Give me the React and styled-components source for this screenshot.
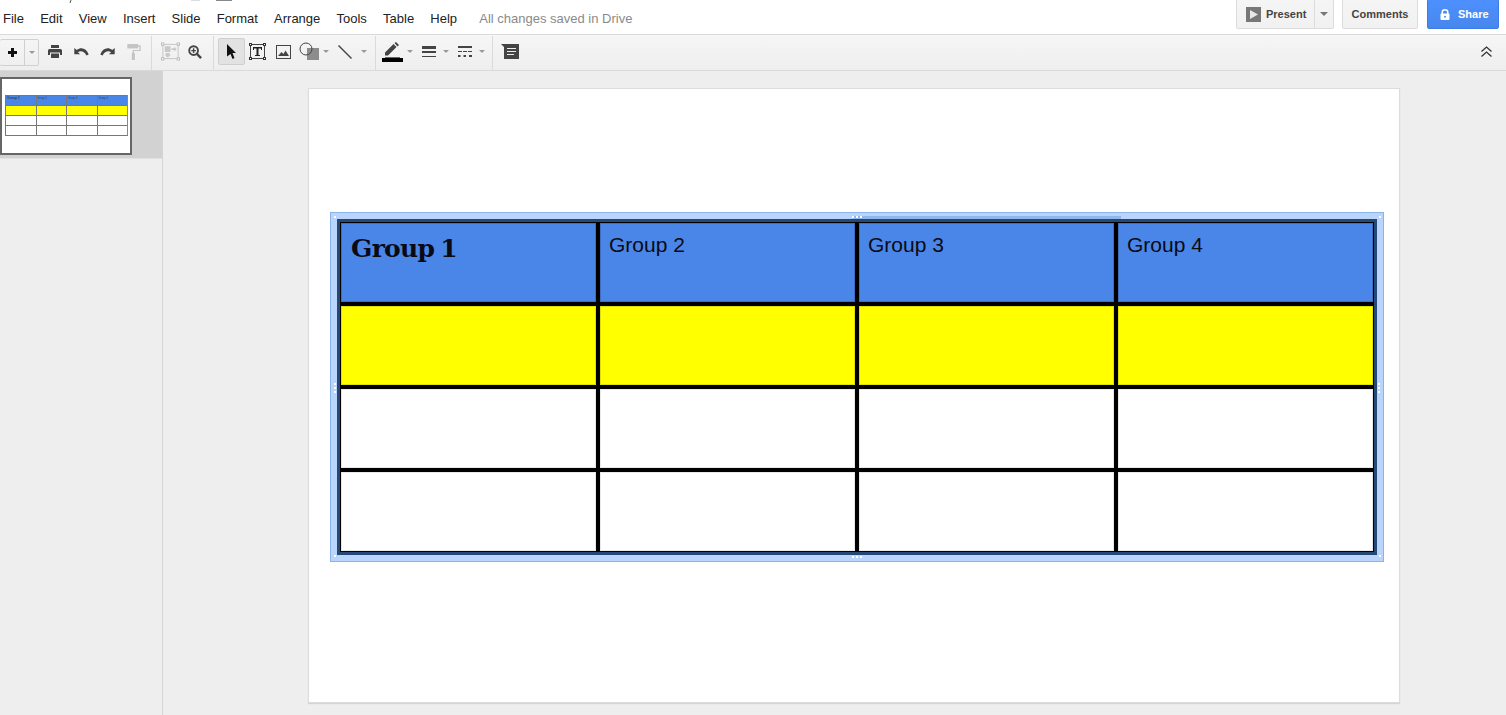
import React from "react";
import styled, { createGlobalStyle } from "styled-components";

const Global = createGlobalStyle`
  html, body { margin: 0; padding: 0; height: 100%; overflow: hidden; background: #eee; }
  body { font-family: "Liberation Sans", Arial, sans-serif; }
  svg { display: block; }
`;

const Page = styled.div`
  width: 1506px; height: 715px; display: flex; flex-direction: column; overflow: hidden;
`;
const Header = styled.header`
  height: 34px; flex: none; background: #fff; display: flex; justify-content: space-between; align-items: flex-start;
`;
const TitleScrap = styled.div`height: 3px; overflow: hidden;`;
const Menu = styled.nav`
  display: flex; align-items: center; gap: 16.2px; padding: 8px 0 0 3px; font-size: 13px; line-height: 15px; color: #222;
`;
const Saved = styled.span`color: #8a8a8a; margin-left: 6px;`;
const Actions = styled.div`display: flex; padding-right: 7px; margin-top: -1px;`;
const Btn = styled.div`
  height: 30px; box-sizing: border-box; display: flex; align-items: center; font-size: 11px; font-weight: bold;
  border: 1px solid ${p => (p.$primary ? "#3b7bea" : "#dcdcdc")}; border-radius: 2px; 
  background: ${p => (p.$primary ? "linear-gradient(#4d90fe,#4787ed)" : "linear-gradient(#f5f5f5,#f1f1f1)")};
  color: ${p => (p.$primary ? "#fff" : "#444")};
  width: ${p => p.$w}px; padding-left: ${p => p.$pl || 0}px; margin-left: ${p => p.$ml || 0}px;
  justify-content: ${p => (p.$center ? "center" : "flex-start")}; gap: ${p => p.$gap || 0}px;
`;
const PresentDrop = styled.div`
  margin-left: auto; width: 18px; height: 100%; border-left: 1px solid #dcdcdc; display: flex; align-items: center; justify-content: center;
`;
const Toolbar = styled.div`
  height: 37px; flex: none; box-sizing: border-box; border-top: 1px solid #dadada; border-bottom: 1px solid #dadada;
  background: linear-gradient(#f6f6f6,#eeeeee); display: flex; align-items: center; padding: 0 14px 2px 0;
`;
const NewBtn = styled.div`
  width: 39px; height: 27px; box-sizing: border-box; border: 1px solid #d0d0d0; border-left: none; border-radius: 2px; display: flex; margin-top: 1px;
`;
const NewPlus = styled.div`width: 24px; display: flex; align-items: center; justify-content: center; border-right: 1px solid #d0d0d0;`;
const NewDrop = styled.div`flex: 1; display: flex; align-items: center; justify-content: center;`;
const Tool = styled.div`
  flex: none; width: ${p => p.$w}px; margin-left: ${p => p.$ml || 0}px; display: flex; align-items: center; justify-content: center; height: 27px;
  ${p => p.$active && "background:#e2e2e2; border:1px solid #cfcfcf; border-radius:2px; box-sizing:border-box;"}
`;
const Divider = styled.div`flex: none; width: 1px; height: 34px; background: #dadada; margin-left: ${p => p.$ml}px; margin-bottom: -2px;`;
const Spacer = styled.div`flex: 1;`;

const Main = styled.main`flex: 1; display: flex; min-height: 0;`;
const Film = styled.aside`
  width: 162px; flex: none; border-right: 1px solid #d4d4d4; background: #eee;
`;
const FilmRow = styled.div`
  height: 88px; box-sizing: border-box; background: #d2d2d2; padding-top: 6px; border-bottom: 1px solid #e2e2e2;
`;
const Thumb = styled.div`
  width: 132px; height: 78px; box-sizing: border-box; border: 2px solid #666; background: #fff; padding: 16px 2px 0 3px;
`;
const ThumbGrid = styled.div`
  display: grid; grid-template-columns: repeat(4, 1fr); grid-auto-rows: 10px; width: 122px; border-right: 1px solid #888; border-bottom: 1px solid #777;
`;
const ThumbCell = styled.div`
  background: ${p => p.$bg}; border-left: 1px solid #777; border-top: 1px solid #777; box-sizing: border-box; overflow: hidden;
  font-size: ${p => (p.$bold ? 3.4 : 2.6)}px; line-height: 5px; font-weight: ${p => (p.$bold ? "bold" : "normal")}; padding-left: 1px; color: #345;
`;
const Canvas = styled.div`flex: 1; padding: 17px 0 0 145px; min-width: 0;`;
const Slide = styled.section`
  width: 1092px; height: 615px; box-sizing: border-box; background: #fff; border: 1px solid #dcdcdc; box-shadow: 0 1px 1px #d4d4d4;
  padding: 123px 0 0 21px;
`;
const Selection = styled.div`
  position: relative; width: 1054px; height: 350px; box-sizing: border-box; border: 1px solid #8ab3ea; background: #b9d5fb; padding: 6px;
`;
const Frame = styled.div`
  border: 3px solid #264876; background: #000; padding: 1px;
`;
const Grid = styled.div`
  display: grid; grid-template-columns: repeat(4, 255px); grid-auto-rows: 79px; gap: 4px; background: #000;
`;
const Cell = styled.div`
  background: ${p => p.$bg}; padding: 10px 0 0 9px; box-sizing: border-box; color: #0a0a14;
  box-shadow: inset 0 0 0 1px ${p => p.$edge};
  font-family: "Liberation Sans", Arial, sans-serif; font-size: 21px; line-height: 24px;
`;
const BoldCell = styled(Cell)`
  font-family: "DejaVu Serif", serif; font-weight: bold; font-size: 25px; line-height: 30px; padding-top: 11px; padding-left: 10px; letter-spacing: -.7px; word-spacing: -2px;
`;
const Band = styled.div`position: absolute; top: 3px; left: 521px; width: 269px; height: 3px; background: #8fb6ef;`;
const Dots = styled.div`
  position: absolute; display: flex; flex-direction: ${p => (p.$v ? "column" : "row")}; gap: 2px;
  ${p => p.$pos}
`;
const Dot = styled.i`display: block; width: 2px; height: 2px; background: #fff;`;

const Caret = ({ c = "#999", w = 6, h = 3 }) => (
  <svg width={w} height={h} viewBox="0 0 6 3"><path d="M0 0h6L3 3z" fill={c} /></svg>
);

const rows = ["#4a86e8", "#ffff00", "#fff", "#fff"];
const edges = { "#4a86e8": "#3d6fc0", "#ffff00": "#e0e000", "#fff": "#e8e8e8" };
const heads = ["Group 1", "Group 2", "Group 3", "Group 4"];

export default function App() {
  return (
    <Page>
      <Global />
      <Header>
        <div>
          <TitleScrap>
            <svg width="240" height="3" viewBox="0 0 240 3">
              <path d="M70 3l1-3" stroke="#555" fill="none" />
              <rect x="216" y="0" width="16" height="1" fill="#888" />
              <rect x="191" y="0" width="9" height="1" fill="#ddd" />
            </svg>
          </TitleScrap>
          <Menu>
            {["File", "Edit", "View", "Insert", "Slide", "Format", "Arrange", "Tools", "Table", "Help"].map(m => (
              <span key={m}>{m}</span>
            ))}
            <Saved>All changes saved in Drive</Saved>
          </Menu>
        </div>
        <Actions>
          <Btn $w={98} $pl={9} $gap={5}>
            <svg width="15" height="15" viewBox="0 0 15 15"><rect width="15" height="15" fill="#777" /><path d="M4 3l8 4.500-8 4.500z" fill="#e8e8e8" /></svg>
            Present
            <PresentDrop><Caret c="#777" w={8} h={4} /></PresentDrop>
          </Btn>
          <Btn $w={76} $ml={8} $center>Comments</Btn>
          <Btn $w={72} $ml={9} $primary $pl={12} $gap={8}>
            <svg width="10" height="11" viewBox="0 0 10 11"><path d="M1.500 5V3.200a3.500 3.200 0 0 1 7 0V5H7V3.200a2 1.800 0 0 0-4 0V5z" fill="#fff" /><rect x="0.500" y="4.500" width="9" height="6.500" rx="1" fill="#fff" /><circle cx="5" cy="7.700" r="1" fill="#4d8df5" /></svg>
            Share
          </Btn>
        </Actions>
      </Header>

      <Toolbar>
        <NewBtn>
          <NewPlus><svg width="9" height="9" viewBox="0 0 9 9"><path d="M3 0h3v3h3v3H6v3H3V6H0V3h3z" fill="#111" /></svg></NewPlus>
          <NewDrop><Caret /></NewDrop>
        </NewBtn>
        <Tool $w={17} $ml={7}>
          <svg width="14" height="13" viewBox="0 0 14 13" fill="#444"><rect x="3" y="0" width="8" height="3" /><path d="M1.500 4h11A1.500 1.500 0 0 1 14 5.500V10h-2V7.500H2V10H0V5.500A1.500 1.500 0 0 1 1.500 4z" /><rect x="3" y="8.500" width="8" height="4.500" /></svg>
        </Tool>
        <Tool $w={17} $ml={10}>
          <svg width="15" height="9" viewBox="0 0 16 10" fill="#444"><path d="M0 1l0 7h6.500L4 5.700C6.500 3.900 10.800 3.900 13.500 9.500L16 8.300C13.500 1.500 7.500-.5 2.700 3.400z" /></svg>
        </Tool>
        <Tool $w={17} $ml={9}>
          <svg width="15" height="9" viewBox="0 0 16 10" fill="#444"><path d="M16 1v7H9.500L12 5.700C9.500 3.900 5.200 3.900 2.500 9.500L0 8.300C2.500 1.500 8.500-.5 13.300 3.400z" /></svg>
        </Tool>
        <Tool $w={16} $ml={10}>
          <svg width="14" height="16" viewBox="0 0 15 18" fill="#c4c4c4"><rect x="0" y="0" width="12" height="5" /><path d="M12 1.500h3V8H7.500v2H6V6.800h7.500V3H12z" /><rect x="5" y="10" width="3.500" height="8" /></svg>
        </Tool>
        <Divider $ml={9} />
        <Tool $w={20} $ml={8}>
          <svg width="19" height="19" viewBox="0 0 20 19" fill="none"><rect x="2" y="2" width="16" height="15" stroke="#c4c4c4" /><g fill="#fafafa" stroke="#bbb"><rect x=".5" y=".5" width="2.500" height="2.500" /><rect x="17" y=".5" width="2.500" height="2.500" /><rect x=".5" y="16" width="2.500" height="2.500" /><rect x="17" y="16" width="2.500" height="2.500" /></g><rect x="4" y="4" width="6" height="6" fill="#c8c8c8" /><path d="M11 6h3V4.500L16.500 7 14 9.500V8h-3zM5 11h4v2h1.500L7 16l-3-3h1z" fill="#c8c8c8" /></svg>
        </Tool>
        <Tool $w={16} $ml={7}>
          <svg width="14" height="14" viewBox="0 0 15 15" fill="none" stroke="#444"><circle cx="6" cy="6" r="4.700" strokeWidth="2" /><path d="M9.500 9.500L14 14" strokeWidth="2.600" /><path d="M3.500 6h5M6 3.500v5" strokeWidth="1.500" /></svg>
        </Tool>
        <Divider $ml={10} />
        <Tool $w={27} $ml={4} $active>
          <svg width="9" height="15" viewBox="0 0 9 15"><path d="M0 0l9 9H5.500l2 5-2 1-2-5L0 12.500z" fill="#111" /></svg>
        </Tool>
        <Tool $w={17} $ml={4}>
          <svg width="17" height="17" viewBox="0 0 17 17" fill="none"><rect x="1.500" y="1.500" width="14" height="14" stroke="#444" /><g fill="#fff" stroke="#333"><rect x=".5" y=".5" width="2" height="2" /><rect x="14.500" y=".5" width="2" height="2" /><rect x=".5" y="14.500" width="2" height="2" /><rect x="14.500" y="14.500" width="2" height="2" /></g><path d="M4 4h9v3h-1V5.500H9.500V12H11v1H6v-1h1.500V5.500H5V7H4z" fill="#222" stroke="none" /></svg>
        </Tool>
        <Tool $w={17} $ml={9}>
          <svg width="15" height="14" viewBox="0 0 15 14" fill="none"><rect x=".5" y=".5" width="14" height="13" stroke="#444" /><path d="M2 11l3.500-4 2 2 2-3.500L13 11z" fill="#444" /></svg>
        </Tool>
        <Tool $w={21} $ml={6}>
          <svg width="20" height="19" viewBox="0 0 20 19" fill="none"><rect x="8" y="6" width="12" height="12" fill="#8c8c8c" /><circle cx="7" cy="7" r="6" stroke="#444" /></svg>
        </Tool>
        <Tool $w={7} $ml={3}><Caret /></Tool>
        <Tool $w={15} $ml={8}>
          <svg width="14" height="14" viewBox="0 0 14 14"><path d="M.500.500l13 13" stroke="#444" strokeWidth="1.400" /></svg>
        </Tool>
        <Tool $w={7} $ml={8}><Caret /></Tool>
        <Divider $ml={8} />
        <Tool $w={23} $ml={5}>
          <svg width="22" height="20" viewBox="0 0 22 20"><path d="M3 10.500L11.500 2l3 3L6 13.500H3zM12.500 1L14 0l3 3-1.500 1.500z" fill="#444" /><path d="M3 15h15v1H3z" fill="#666" /><rect x="0" y="16" width="21" height="4" fill="#000" /></svg>
        </Tool>
        <Tool $w={7} $ml={2}><Caret /></Tool>
        <Tool $w={15} $ml={8}>
          <svg width="14" height="11" viewBox="0 0 14 11" fill="#444"><rect width="14" height="3" /><rect y="5" width="14" height="2" /><rect y="10" width="14" height="1" /></svg>
        </Tool>
        <Tool $w={7} $ml={6}><Caret /></Tool>
        <Tool $w={16} $ml={8}>
          <svg width="14" height="11" viewBox="0 0 14 11" fill="#444"><rect width="14" height="2" /><path d="M0 5h4v1H0zM5 5h4v1H5zM10 5h4v1h-4z" /><path d="M0 9h2.500v2H0zM5.500 9H8v2H5.500zM11 9h3v2h-3z" /></svg>
        </Tool>
        <Tool $w={7} $ml={5}><Caret /></Tool>
        <Divider $ml={7} />
        <Tool $w={19} $ml={7}>
          <svg width="18" height="15" viewBox="0 0 18 15"><path d="M0 0h18v15H3V3z" fill="#444" /><path d="M6 4h9v1H6zM6 7h9v1H6zM6 10h7v1H6z" fill="#eee" /></svg>
        </Tool>
        <Spacer />
        <svg width="11" height="11" viewBox="0 0 11 11" fill="none" stroke="#333" strokeWidth="1.300"><path d="M.500 5.500l5-4.500 5 4.500M.500 10.500l5-4.500 5 4.500" /></svg>
      </Toolbar>

      <Main>
        <Film>
          <FilmRow>
            <Thumb>
              <ThumbGrid>
                {rows.map((bg, r) =>
                  heads.map((h, c) => (
                    <ThumbCell key={`${r}-${c}`} $bg={bg} $bold={r === 0 && c === 0}>{r === 0 ? h : ""}</ThumbCell>
                  ))
                )}
              </ThumbGrid>
            </Thumb>
          </FilmRow>
        </Film>
        <Canvas>
          <Slide>
            <Selection>
              <Band />
              <Dots $pos="top: 3px; left: 3px;"><Dot /></Dots>
              <Dots $pos="top: 3px; right: 2px;"><Dot /></Dots>
              <Dots $pos="bottom: 4px; left: 3px;"><Dot /></Dots>
              <Dots $pos="bottom: 4px; right: 2px;"><Dot /></Dots>
              <Dots $pos="top: 3px; left: 521px;"><Dot /><Dot /><Dot /></Dots>
              <Dots $pos="bottom: 3px; left: 521px;"><Dot /><Dot /><Dot /></Dots>
              <Dots $v $pos="top: 170px; left: 3px;"><Dot /><Dot /><Dot /></Dots>
              <Dots $v $pos="top: 170px; right: 3px;"><Dot /><Dot /><Dot /></Dots>
              <Frame>
                <Grid>
                  {rows.map((bg, r) =>
                    heads.map((h, c) =>
                      r === 0 && c === 0 ? (
                        <BoldCell key={h} $bg={bg} $edge={edges[bg]}>{h}</BoldCell>
                      ) : (
                        <Cell key={`${r}-${c}`} $bg={bg} $edge={edges[bg]}>{r === 0 ? h : ""}</Cell>
                      )
                    )
                  )}
                </Grid>
              </Frame>
            </Selection>
          </Slide>
        </Canvas>
      </Main>
    </Page>
  );
}
